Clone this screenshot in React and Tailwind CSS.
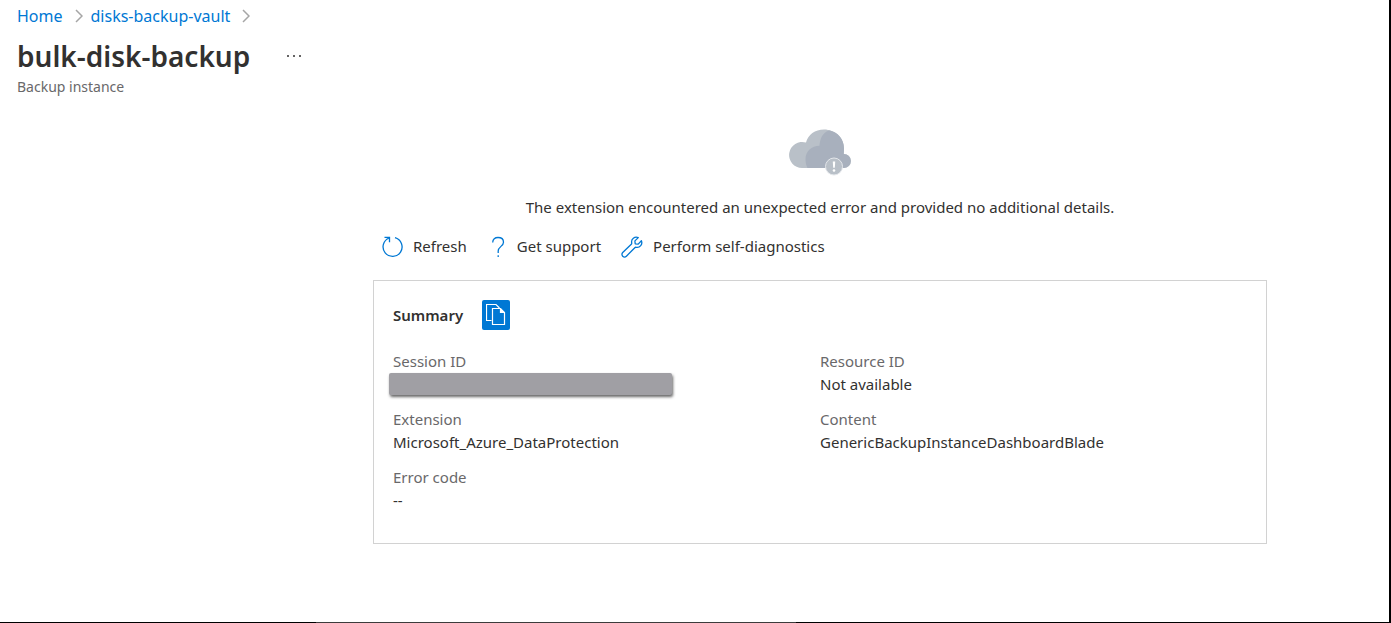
import React from 'react';

const details = [
  { label: 'Session ID', redacted: true },
  { label: 'Resource ID', value: 'Not available' },
  { label: 'Extension', value: 'Microsoft_Azure_DataProtection' },
  { label: 'Content', value: 'GenericBackupInstanceDashboardBlade' },
  { label: 'Error code', value: '--' },
];

const breadcrumbs = ['Home', 'disks-backup-vault'];

function ChevronIcon() {
  return (
    <svg width="8" height="14" viewBox="0 0 8 14" fill="none" stroke="#a6a6a6" strokeWidth="1.5" aria-hidden="true">
      <path d="M1 1l6 6-6 6" />
    </svg>
  );
}

function CloudErrorIcon() {
  return (
    <svg width="62" height="48" viewBox="0 0 62 48" aria-hidden="true">
      <path d="M13 40a13 13 0 1 1 4-25.400C19 6.500 26 1.500 35 1.500c11 0 20 8.500 20 19V26a7 7 0 1 1 0 14z" fill="#b9c0c8" />
      <path d="M40 2.500C33 5 31 11 30.500 17.800 22.500 17.800 16.500 23.500 16.500 31c0 3.500.7 6.500 2 9H55a7 7 0 1 0-.5-14c.3-1.800.5-3.700.5-5.500C55 11 49 4 40 2.500z" fill="#a8b0bd" />
      <circle cx="45" cy="38.500" r="8.500" fill="#b9c0c8" stroke="#e4e7eb" />
      <path d="M43.800 33.500h2.400l-.4 6.300h-1.600z" fill="#fff" />
      <circle cx="45" cy="42.500" r="1.300" fill="#fff" />
    </svg>
  );
}

function RefreshIcon() {
  return (
    <svg width="21" height="22" viewBox="0 0 21 22" fill="none" stroke="#0078d4" strokeWidth="1.300" aria-hidden="true">
      <path d="M13 1.700A9.500 9.500 0 1 1 7.200 2" />
      <path d="M2.500 1.300h5v5" />
    </svg>
  );
}

function QuestionIcon() {
  return (
    <svg width="14" height="22" viewBox="0 0 14 22" fill="none" stroke="#0078d4" strokeWidth="1.300" aria-hidden="true">
      <path d="M1.700 6.500C1.700 3.200 4 1.500 7 1.500s5.500 1.700 5.500 4.700C12.500 10.200 7.200 10.600 7.200 15v2" />
      <path d="M7.200 19.300v1.700" />
    </svg>
  );
}

function WrenchIcon() {
  return (
    <svg width="22" height="22" viewBox="0 0 22 22" fill="none" stroke="#0078d4" strokeWidth="1.300" strokeLinejoin="round" aria-hidden="true">
      <path d="M17.300 1.600c-3.600-1.500-7.400 1.500-6.600 5.300.1.500 0 .9-.4 1.300l-8.600 8.300a2.600 2.600 0 0 0 3.700 3.700l8.400-8.500c.4-.4.800-.5 1.300-.4 3.800.8 6.800-3 5.300-6.600L17.200 8.100 14.200 7.800 13.900 4.900z" />
    </svg>
  );
}

function CopyIcon() {
  return (
    <svg width="20" height="24" viewBox="0 0 20 24" fill="none" stroke="#fff" strokeWidth="1.200" aria-hidden="true">
      <path d="M5.500 17.500h-5v-16H10L13.500 5" />
      <path d="M6.500 5.500h8l4 4v12h-12z" fill="#0078d4" />
      <path d="M14.500 5.500v4h4" fill="#fff" />
    </svg>
  );
}

const actions = [
  { label: 'Refresh', icon: RefreshIcon, spacing: 'gap-2.5 mr-6' },
  { label: 'Get support', icon: QuestionIcon, spacing: 'gap-3 mr-5' },
  { label: 'Perform self-diagnostics', icon: WrenchIcon, spacing: 'gap-2.5' },
];

export default function App() {
  return (
    <div className="flex min-h-screen flex-col border-r-2 border-black bg-white font-['Noto_Sans','Open_Sans',sans-serif] text-[15px] leading-[23px] text-[#323130]">
      <header className="px-[17px] pt-1">
        <nav aria-label="Breadcrumb" className="flex items-center text-base leading-6 text-[#0078d4]">
          {breadcrumbs.map((crumb) => (
            <React.Fragment key={crumb}>
              <a href="#" className="hover:underline">{crumb}</a>
              <span className="ml-3 mr-2">
                <ChevronIcon />
              </span>
            </React.Fragment>
          ))}
        </nav>
        <div className="mt-2 flex items-center">
          <h1 className="text-[28px] font-semibold leading-10">bulk-disk-backup</h1>
          <button type="button" aria-label="More actions" className="ml-9">
            <svg width="16" height="4" viewBox="0 0 16 4" fill="#323130" aria-hidden="true">
              <circle cx="2" cy="2" r="1" />
              <circle cx="8" cy="2" r="1" />
              <circle cx="14" cy="2" r="1" />
            </svg>
          </button>
        </div>
        <p className="text-sm leading-[22px] text-[#69686a]">Backup instance</p>
      </header>

      <main className="ml-[373px] mr-[122px] mt-[30px]">
        <div className="flex flex-col items-center">
          <CloudErrorIcon />
          <p className="mt-5">The extension encountered an unexpected error and provided no additional details.</p>
        </div>

        <div className="mt-4 flex px-[9px]">
          {actions.map(({ label, icon: Icon, spacing }) => (
            <button key={label} type="button" className={`flex items-center ${spacing}`}>
              <Icon />
              {label}
            </button>
          ))}
        </div>

        <section className="mt-[22px] border border-[#d2d2d2] px-[19px] pb-[31px] pt-[19px]">
          <div className="flex items-center gap-[19px]">
            <h2 className="font-semibold">Summary</h2>
            <button
              type="button"
              aria-label="Copy summary"
              className="flex h-[30px] w-7 items-center justify-center rounded-xs bg-[#0078d4]"
            >
              <CopyIcon />
            </button>
          </div>
          <dl className="mt-5 grid grid-cols-2 gap-y-3">
            {details.map(({ label, value, redacted }) => (
              <div key={label}>
                <dt className="text-[#69686a]">{label}</dt>
                {redacted ? (
                  <dd className="-ml-1 h-[22px] w-[283px] rounded-xs bg-[#a09fa4] shadow-[1px_2px_3px_rgba(0,0,0,0.6)]" />
                ) : (
                  <dd>{value}</dd>
                )}
              </div>
            ))}
          </dl>
        </section>
      </main>

      <footer className="mt-auto flex h-px bg-black">
        <div className="ml-[316px] w-[480px] bg-[#3c3c3c]" />
      </footer>
    </div>
  );
}
